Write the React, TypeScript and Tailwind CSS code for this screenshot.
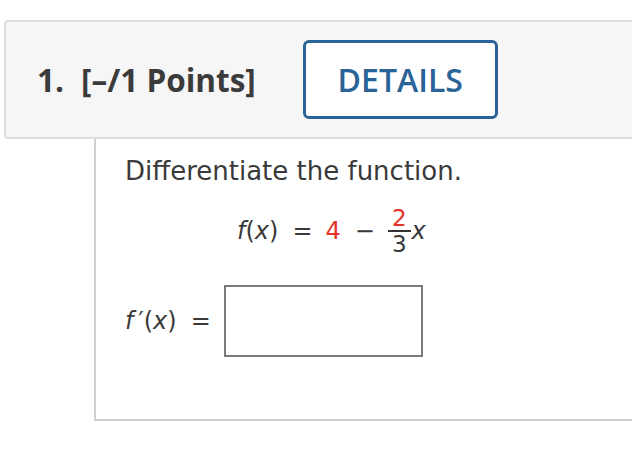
import React from 'react';

const Fraction: React.FC<{ num: string; den: string }> = ({ num, den }) => (
    <span className="inline-flex flex-col items-center mx-[1px]">
        <span className="text-[#e5322a] text-[23px] leading-[23px] px-[4px]">{num}</span>
        <span className="w-full border-t-2 border-[#333]" />
        <span className="text-[23px] leading-[25px] px-[4px]">{den}</span>
    </span>
);

const App: React.FC = () => {
    return (
        <div className="w-[632px] h-[456px] overflow-hidden bg-white pt-5 pl-1 font-['DejaVu_Sans',sans-serif] text-[#3a3a3a]">
            <div className="w-[720px]">
                <div className="h-[119px] flex items-center pl-[31px] bg-[#f6f6f6] border-2 border-[#dedede] rounded-[4px] font-['Open_Sans',sans-serif] text-[#3b3b3b]">
                    <span className="text-[31.5px] font-bold">1.</span>
                    <span className="ml-[17px] text-[31.5px] font-bold">[–/1 Points]</span>
                    <button className="ml-[47px] w-[195px] h-[79px] border-[3px] border-[#2a6397] rounded-[6px] bg-white text-[#2a6397] text-[32px] font-semibold">
                        DETAILS
                    </button>
                </div>

                <div className="ml-[90px] h-[282px] border-l-2 border-b-2 border-[#cfcfcf] pl-[29px] pt-[16px]">
                    <p className="text-[26px] leading-[32px]">Differentiate the function.</p>

                    <div className="mt-[17px] ml-[112px] flex items-center text-[24px] leading-[28px]">
                        <span><i>f</i>(<i>x</i>)</span>
                        <span className="ml-[14px]">=</span>
                        <span className="ml-[13px] text-[#e5322a]">4</span>
                        <span className="ml-[14px]">−</span>
                        <span className="ml-[12px]"><Fraction num="2" den="3" /></span>
                        <i>x</i>
                    </div>

                    <div className="mt-[28px] flex items-center text-[24px]">
                        <span><i>f</i>&thinsp;′(<i>x</i>)</span>
                        <span className="ml-[14px]">=</span>
                        <input type="text" className="ml-[13px] w-[199px] h-[72px] border-2 border-[#7a7a7a] bg-white outline-none" />
                    </div>
                </div>
            </div>
        </div>
    );
};

export default App;
